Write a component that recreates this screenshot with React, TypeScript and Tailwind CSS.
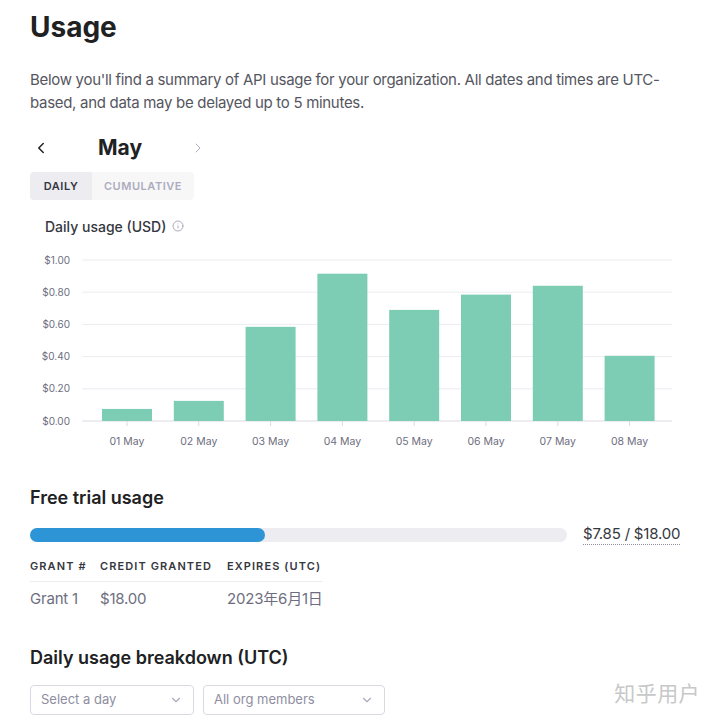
import { ChevronLeft, ChevronRight, ChevronDown, Info } from "lucide-react";

const days = [
  { label: "01 May", value: 0.075 },
  { label: "02 May", value: 0.125 },
  { label: "03 May", value: 0.585 },
  { label: "04 May", value: 0.915 },
  { label: "05 May", value: 0.69 },
  { label: "06 May", value: 0.785 },
  { label: "07 May", value: 0.84 },
  { label: "08 May", value: 0.405 },
];

const ticks = [1, 0.8, 0.6, 0.4, 0.2, 0];

function UsageChart() {
  const base = 181;
  const scale = 161;
  return (
    <svg width={650} height={220} className="block" style={{ fontFamily: "Inter, 'Noto Sans', sans-serif" }}>
      {ticks.map((t) => {
        const y = base - t * scale;
        return (
          <g key={t}>
            <line x1={52} x2={642} y1={y} y2={y} stroke={t === 0 ? "#d9d9e3" : "#ececf1"} strokeWidth={1} />
            <text x={40} y={y + 3.5} textAnchor="end" fontSize={10} fill="#6e6e80">
              ${t.toFixed(2)}
            </text>
          </g>
        );
      })}
      {days.map((d, i) => {
        const cx = 97 + i * 71.8;
        const h = d.value * scale;
        return (
          <g key={d.label}>
            <rect x={cx - 25} y={base - h} width={50} height={h} fill="#7dcdb5" />
            <line x1={cx} x2={cx} y1={base} y2={base + 5} stroke="#d9d9e3" />
            <text x={cx} y={base + 24} textAnchor="middle" fontSize={10.5} fill="#6e6e80">
              {d.label}
            </text>
          </g>
        );
      })}
    </svg>
  );
}

export default function App() {
  return (
    <div
      className="relative w-[720px] h-[720px] overflow-hidden bg-white px-[30px] text-[#202123]"
      style={{ fontFamily: "Inter, 'Noto Sans', 'Noto Sans CJK SC', sans-serif" }}
    >
      <h1 className="pt-[9px] text-[28px] leading-[36px] font-bold">Usage</h1>
      <p className="mt-[23px] text-[15px] leading-[23px] tracking-[-0.3px] text-[#555660] w-[632px]">
        Below you'll find a summary of API usage for your organization. All dates and times are UTC-based, and data may be delayed up to 5 minutes.
      </p>

      <div className="mt-[20px] flex h-[28px] items-center">
        <ChevronLeft size={18} strokeWidth={2} className="ml-[2px] text-[#202123]" />
        <span className="ml-[48px] text-[21px] font-bold">May</span>
        <ChevronRight size={16} strokeWidth={1.5} className="ml-[48px] text-[#acacbe]" />
      </div>

      <div className="mt-[10px] flex h-[28px] w-fit text-[11px] font-semibold tracking-[0.05em]">
        <div className="flex w-[62px] items-center justify-center rounded-l bg-[#ececf1] text-[#353740]">DAILY</div>
        <div className="flex w-[102px] items-center justify-center rounded-r bg-[#f7f7f8] text-[#acacbe]">CUMULATIVE</div>
      </div>

      <div className="mt-[16px] ml-[15px] flex h-[20px] items-center gap-[6px] text-[14px] font-medium text-[#353740]">
        Daily usage (USD)
        <Info size={12} className="text-[#acacbe]" />
      </div>

      <div className="mt-[4px]">
        <UsageChart />
      </div>

      <h2 className="mt-[24px] text-[18px] leading-[28px] font-semibold">Free trial usage</h2>

      <div className="mt-[12px] flex items-center">
        <div className="h-[14px] w-[537px] rounded-full bg-[#ececf1]">
          <div className="h-full w-[235px] rounded-full bg-[#2d95d5]" />
        </div>
        <span className="ml-[16px] text-[15px] leading-[20px] tracking-[-0.2px] text-[#353740] border-b border-dotted border-[#8e8ea0]">
          $7.85 / $18.00
        </span>
      </div>

      <div className="mt-[7px] w-fit">
        <div className="flex h-[30px] items-center whitespace-nowrap border-b border-[#ececf1] text-[11px] font-semibold tracking-[0.1em] text-[#353740]">
          <div className="w-[70px]">GRANT #</div>
          <div className="w-[127px]">CREDIT GRANTED</div>
          <div>EXPIRES (UTC)</div>
        </div>
        <div className="flex h-[34px] items-center whitespace-nowrap text-[15px] tracking-[-0.2px] text-[#6e6e80]">
          <div className="w-[70px]">Grant 1</div>
          <div className="w-[127px]">$18.00</div>
          <div>2023年6月1日</div>
        </div>
      </div>

      <h2 className="mt-[28px] text-[18px] leading-[28px] font-semibold">Daily usage breakdown (UTC)</h2>

      <div className="mt-[13px] flex gap-[9px]">
        <div className="flex h-[30px] w-[164px] items-center justify-between rounded-[4px] border border-[#d9d9e3] px-[10px] text-[13px] text-[#8e8ea0]">
          Select a day
          <ChevronDown size={14} className="text-[#acacbe]" />
        </div>
        <div className="flex h-[30px] w-[182px] items-center justify-between rounded-[4px] border border-[#d9d9e3] px-[10px] text-[13px] text-[#8e8ea0]">
          All org members
          <ChevronDown size={14} className="text-[#acacbe]" />
        </div>
      </div>

      <div
        className="absolute right-[20px] bottom-[12px] text-[21px] tracking-[0.02em] text-[#c8c8c8]"
        style={{ fontFamily: "'Noto Sans CJK SC', sans-serif" }}
      >
        知乎用户
      </div>
    </div>
  );
}
